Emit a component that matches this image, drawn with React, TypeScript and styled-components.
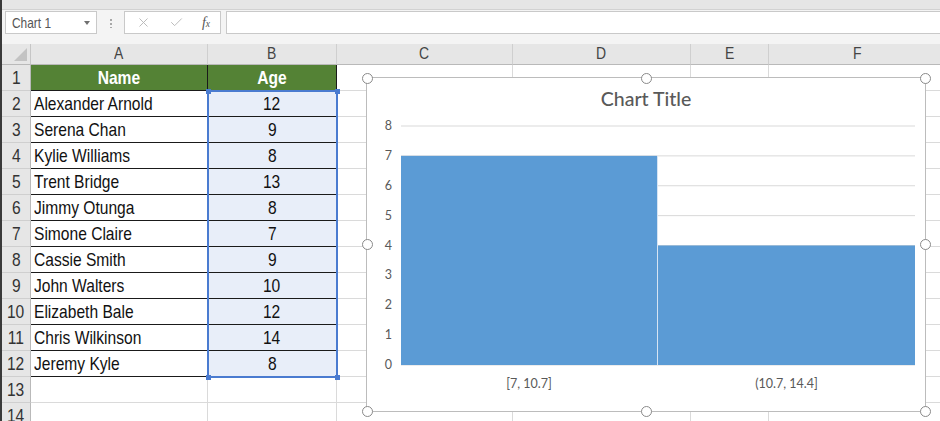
import React from "react"
import styled, { createGlobalStyle } from "styled-components"
import { X, Check } from "lucide-react"

const GlobalStyle = createGlobalStyle`
  html, body {
    margin: 0;
    padding: 0;
    background: #ffffff;
    overflow: hidden;
  }
`

const COLS = [29, 177, 129, 176, 178, 78, 178]
const LETTERS = ["A", "B", "C", "D", "E", "F"]

const people: [string, number][] = [
  ["Alexander Arnold", 12],
  ["Serena Chan", 9],
  ["Kylie Williams", 8],
  ["Trent Bridge", 13],
  ["Jimmy Otunga", 8],
  ["Simone Claire", 7],
  ["Cassie Smith", 9],
  ["John Walters", 10],
  ["Elizabeth Bale", 12],
  ["Chris Wilkinson", 14],
  ["Jeremy Kyle", 8],
]

// chart geometry (svg coordinates)
const PLOT_LEFT = 34
const PLOT_RIGHT = 548
const PLOT_TOP = 8
const STEP = 29.875
const baseY = PLOT_TOP + STEP * 8
const yOf = (v: number) => baseY - v * STEP

const bins = [
  { label: "[7, 10.7]", value: 7, x0: PLOT_LEFT, x1: 290 },
  { label: "(10.7, 14.4]", value: 4, x0: 291, x1: PLOT_RIGHT },
]

export default function App() {
  const rows = Array.from({ length: 14 }, (_, i) => i + 1)
  return (
    <Page>
      <GlobalStyle />
      <TopStrip />
      <FormulaBar>
        <NameBox>
          <Narrow $origin="left">Chart 1</Narrow>
          <DropArrow />
        </NameBox>
        <Grip>
          <GripDots />
        </Grip>
        <ActionBox>
          <X size={15} strokeWidth={1.5} color="#b8b8b8" />
          <Check size={15} strokeWidth={1.5} color="#b8b8b8" />
          <Fx>
            f<sub>x</sub>
          </Fx>
        </ActionBox>
        <FormulaInput />
      </FormulaBar>

      <Sheet>
        <Corner>
          <CornerTriangle />
        </Corner>
        {LETTERS.map((l) => (
          <ColHeader key={l}>
            <Narrow>{l}</Narrow>
          </ColHeader>
        ))}

        {rows.map((r) => {
          const person = r >= 2 && r <= 12 ? people[r - 2] : null
          return (
            <React.Fragment key={r}>
              <RowHeader>
                <Narrow>{r}</Narrow>
              </RowHeader>
              {LETTERS.map((l) => {
                if (r === 1 && (l === "A" || l === "B"))
                  return (
                    <Cell key={l} $head $boxed $align="center">
                      <Narrow>{l === "A" ? "Name" : "Age"}</Narrow>
                    </Cell>
                  )
                if (person && l === "A")
                  return (
                    <Cell key={l} $boxed>
                      <Narrow $origin="left">{person[0]}</Narrow>
                    </Cell>
                  )
                if (person && l === "B")
                  return (
                    <Cell key={l} $boxed $picked $align="center">
                      <Narrow>{person[1]}</Narrow>
                    </Cell>
                  )
                return <Cell key={l} />
              })}
            </React.Fragment>
          )
        })}

        <Selection>
          <SelHandle $x="left" $y="top" />
          <SelHandle $x="right" $y="top" />
          <SelHandle $x="left" $y="bottom" />
          <SelHandle $x="right" $y="bottom" />
        </Selection>

        <ChartFrame>
          <ChartTitle>Chart Title</ChartTitle>
          <Plot width={558} height={292} viewBox="0 0 558 292">
            {Array.from({ length: 9 }, (_, v) => (
              <g key={v}>
                <line
                  x1={PLOT_LEFT}
                  x2={PLOT_RIGHT}
                  y1={yOf(v)}
                  y2={yOf(v)}
                  stroke="#d9d9d9"
                  strokeWidth={1}
                />
                <AxisText x={25} y={yOf(v) + 4} textAnchor="end">
                  {v}
                </AxisText>
              </g>
            ))}
            {bins.map((b) => (
              <g key={b.label}>
                <rect
                  x={b.x0}
                  y={yOf(b.value)}
                  width={b.x1 - b.x0}
                  height={baseY - yOf(b.value)}
                  fill="#5b9bd5"
                />
                <AxisText x={(b.x0 + b.x1) / 2} y={baseY + 23} textAnchor="middle">
                  {b.label}
                </AxisText>
              </g>
            ))}
            <line x1={290.5} x2={290.5} y1={yOf(7)} y2={baseY} stroke="#d6e4f3" strokeWidth={1} />
          </Plot>
          <Knob $left="0%" $top="0%" />
          <Knob $left="50%" $top="0%" />
          <Knob $left="100%" $top="0%" />
          <Knob $left="0%" $top="50%" />
          <Knob $left="100%" $top="50%" />
          <Knob $left="0%" $top="100%" />
          <Knob $left="50%" $top="100%" />
          <Knob $left="100%" $top="100%" />
        </ChartFrame>
      </Sheet>
    </Page>
  )
}

const Page = styled.div`
  position: relative;
  width: 938px;
  height: 421px;
  overflow: hidden;
  border-left: 2px solid #3a3a3a;
  background: #ffffff;
  font-family: "Liberation Sans", Arial, sans-serif;
`

// the screenshot's text is tall and narrow, so squeeze it horizontally
const Narrow = styled.span<{ $origin?: "left" | "center" }>`
  display: inline-block;
  white-space: nowrap;
  transform: scaleX(0.82);
  transform-origin: ${(p) => p.$origin ?? "center"} center;
`

const TopStrip = styled.div`
  height: 9px;
  background: #e6e6e6;
  border-bottom: 1px solid #d2d2d2;
`

const FormulaBar = styled.div`
  height: 34px;
  box-sizing: border-box;
  display: flex;
  align-items: flex-start;
  padding: 1px 0 0 3px;
  background: #f4f4f4;
`

const BoxBase = styled.div`
  height: 23px;
  box-sizing: border-box;
  background: #ffffff;
  border: 1px solid #c9c9c9;
  display: flex;
  align-items: center;
`

const NameBox = styled(BoxBase)`
  width: 92px;
  padding: 0 6px 0 6px;
  justify-content: space-between;
  font-size: 14.5px;
  color: #555555;
`

const DropArrow = styled.span`
  width: 0;
  height: 0;
  border-left: 3.5px solid transparent;
  border-right: 3.5px solid transparent;
  border-top: 4px solid #707070;
`

const Grip = styled.div`
  width: 27px;
  height: 23px;
  display: flex;
  align-items: center;
  justify-content: center;
`

const GripDots = styled.span`
  width: 2px;
  height: 10px;
  background: radial-gradient(circle, #a8a8a8 0.9px, transparent 1.1px) 0 0 / 2px 4px repeat-y;
`

const ActionBox = styled(BoxBase)`
  width: 97px;
  padding: 0 10px 0 11px;
  justify-content: space-between;
`

const Fx = styled.span`
  font-family: "Liberation Serif", "Times New Roman", serif;
  font-style: italic;
  font-size: 14px;
  color: #555555;

  sub {
    font-size: 9.5px;
    vertical-align: 0;
  }
`

const FormulaInput = styled(BoxBase)`
  flex: 1;
  margin-left: 5px;
  border-right: none;
`

const Sheet = styled.div`
  position: relative;
  display: grid;
  grid-template-columns: ${COLS.map((w) => `${w}px`).join(" ")};
  grid-template-rows: 21px repeat(14, 26px);
  width: max-content;
`

const Corner = styled.div`
  position: relative;
  background: #e6e6e6;
  border-right: 1px solid #c6c6c6;
  border-bottom: 1px solid #b9b9b9;
`

const CornerTriangle = styled.div`
  position: absolute;
  right: 3px;
  bottom: 3px;
  width: 0;
  height: 0;
  border-left: 13px solid transparent;
  border-bottom: 13px solid #c3c3c3;
`

const ColHeader = styled.div`
  background: #e6e6e6;
  border-right: 1px solid #cfcfcf;
  border-bottom: 1px solid #b9b9b9;
  display: flex;
  align-items: center;
  justify-content: center;
  font-size: 17px;
  color: #444444;
`

const RowHeader = styled.div`
  background: #e6e6e6;
  border-right: 1px solid #b9b9b9;
  border-bottom: 1px solid #cfcfcf;
  display: flex;
  align-items: center;
  justify-content: center;
  font-size: 19px;
  color: #333333;
`

const Cell = styled.div<{
  $head?: boolean
  $boxed?: boolean
  $picked?: boolean
  $align?: "left" | "center"
}>`
  box-sizing: border-box;
  display: flex;
  align-items: center;
  justify-content: ${(p) => (p.$align === "center" ? "center" : "flex-start")};
  padding: 0 3px;
  font-size: 19px;
  white-space: nowrap;
  overflow: hidden;
  color: ${(p) => (p.$head ? "#ffffff" : "#111111")};
  font-weight: ${(p) => (p.$head ? 700 : 400)};
  background: ${(p) => (p.$head ? "#548235" : p.$picked ? "#e8eef9" : "#ffffff")};
  border-right: 1px solid ${(p) => (p.$boxed ? "#1a1a1a" : "#dadada")};
  border-bottom: 1px solid ${(p) => (p.$boxed ? "#1a1a1a" : "#dadada")};
`

const Selection = styled.div`
  position: absolute;
  left: 205px;
  top: 46px;
  width: 131px;
  height: 288px;
  box-sizing: border-box;
  border: 2px solid #4a7bd0;
  pointer-events: none;
`

const SelHandle = styled.div<{ $x: "left" | "right"; $y: "top" | "bottom" }>`
  position: absolute;
  width: 5px;
  height: 5px;
  background: #4a7bd0;
  ${(p) => p.$x}: -3.5px;
  ${(p) => p.$y}: -3.5px;
`

const ChartFrame = styled.div`
  position: absolute;
  left: 364px;
  top: 33px;
  width: 560px;
  height: 335px;
  box-sizing: border-box;
  border: 1px solid #bcbcbc;
  background: #ffffff;
  display: flex;
  flex-direction: column;
`

const ChartTitle = styled.div`
  height: 40px;
  display: flex;
  align-items: center;
  justify-content: center;
  font-family: Lato, "Open Sans", sans-serif;
  font-size: 19.5px;
  font-weight: 500;
  color: #595959;
`

const Plot = styled.svg`
  display: block;
`

const AxisText = styled.text`
  font-family: Lato, "Open Sans", sans-serif;
  font-size: 12.5px;
  fill: #595959;
`

const Knob = styled.div<{ $left: string; $top: string }>`
  position: absolute;
  left: ${(p) => p.$left};
  top: ${(p) => p.$top};
  width: 9px;
  height: 9px;
  margin: -5.5px 0 0 -5.5px;
  border-radius: 50%;
  border: 1.5px solid #8a8a8a;
  background: #ffffff;
`
